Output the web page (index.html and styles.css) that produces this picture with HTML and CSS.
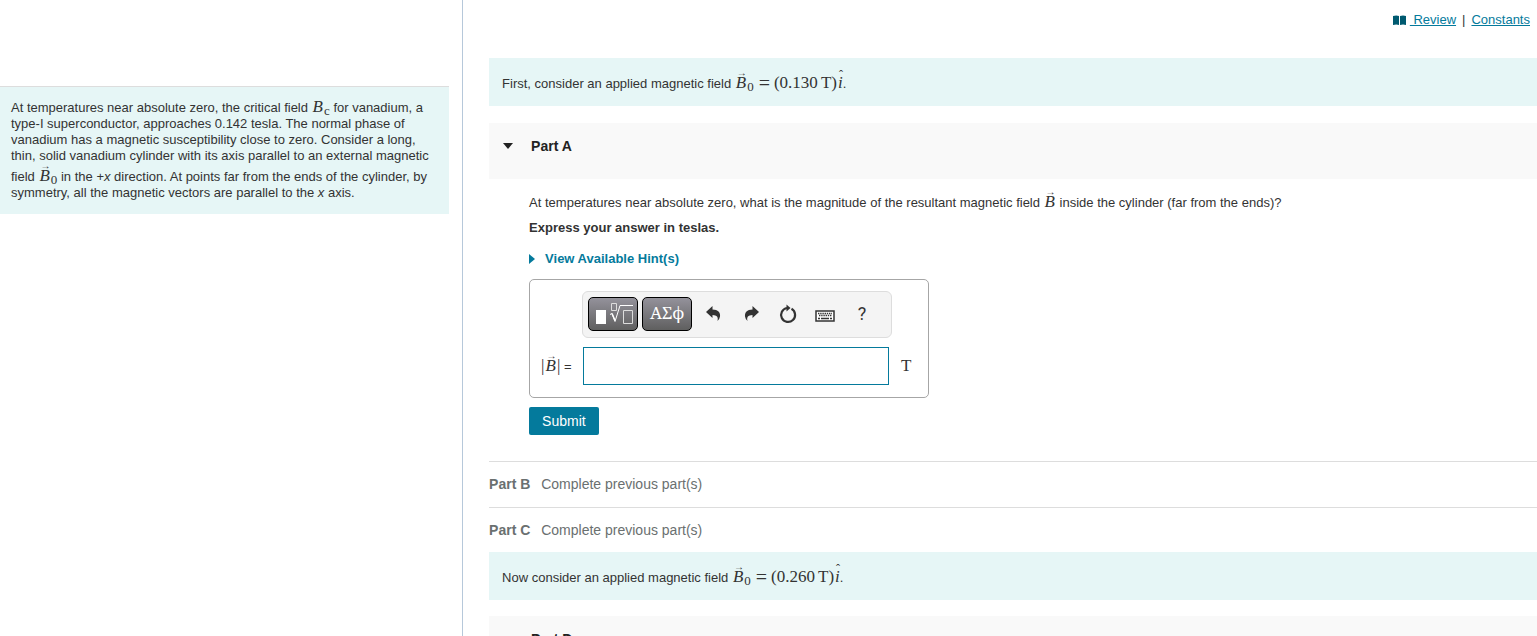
FILE: index.html
```html
<!DOCTYPE html>
<html lang="en">
<head>
  <meta charset="UTF-8">
  <meta name="viewport" content="width=device-width, initial-scale=1.0">
  <title>Superconductor in a Magnetic Field</title>
  <link rel="stylesheet" href="styles.css">
</head>
<body>
  <div class="layout">

    <!-- Problem statement -->
    <aside class="sidebar">
      <div class="intro">
        At temperatures near absolute zero, the critical field
        <span class="math"><span class="vec plain"><i>B</i></span><sub>c</sub></span> for vanadium, a type-I superconductor,
        approaches 0.142 tesla. The normal phase of vanadium has a magnetic susceptibility close
        to zero. Consider a long, thin, solid vanadium cylinder with its axis parallel to an
        external magnetic field <span class="math tall"><span class="vec"><i>B</i></span><sub>0</sub></span>
        in the +<i>x</i> direction. At points far from the ends of the cylinder, by symmetry, all
        the magnetic vectors are parallel to the <i>x</i> axis.
      </div>
    </aside>

    <main class="content">
      <nav class="top-links">
        <svg class="book" viewBox="0 0 14 11" aria-hidden="true">
          <path d="M0 1Q3.500 0 6 1V10Q3.500 9 0 10ZM7 1Q10 0 13 1V10Q10 9 7 10Z"/>
        </svg>
        <a href="#review">&nbsp;Review</a>
        <span class="divider">|</span>
        <a href="#constants">Constants</a>
      </nav>

      <div class="banner">
        First, consider an applied magnetic field
        <span class="math"><span class="vec"><i>B</i></span><sub>0</sub><span class="rel">=</span>(0.130<span class="unit">T</span>)<span class="hat"><i>i</i></span></span>.
      </div>

      <!-- Part A -->
      <section class="part">
        <h2 class="part-title">
          <button type="button" class="toggle"><span class="caret"></span>Part A</button>
        </h2>
        <div class="part-body">
          <p class="question">
            At temperatures near absolute zero, what is the magnitude of the resultant magnetic field
            <span class="math"><span class="vec"><i>B</i></span></span> inside the cylinder (far from the ends)?
          </p>
          <p class="instructions">Express your answer in teslas.</p>
          <button type="button" class="hints"><span class="arrow"></span>View Available Hint(s)</button>

          <form>
            <div class="answer">
              <div class="toolbar">
                <button type="button" class="key" aria-label="Templates">
                  <svg width="40" height="26" viewBox="0 0 40 26" aria-hidden="true">
                    <path d="M3 10h10v14H3z" fill="#fff"/>
                    <path d="M18.500 3.500h5v7h-5zM30.500 10.500h9v13h-9z" fill="none" stroke="#ddd"/>
                    <path d="M17 14.500l2-1 3 8 5-16h13" fill="none" stroke="#fff"/>
                    <path d="M19 13.500l3 7" fill="none" stroke="#fff" stroke-width="1.500"/>
                  </svg>
                </button>
                <button type="button" class="key">ΑΣϕ</button>
                <div class="tools">
                  <button type="button" aria-label="Undo">
                    <svg width="16" height="16" viewBox="0 0 16 16" aria-hidden="true">
                      <path d="M0 6L6.500 0V3.500C12 3.500 14.500 6.500 14 10.500Q13.500 13.500 11.500 15C12.500 11 11 9.200 6.500 9V12Z"/>
                    </svg>
                  </button>
                  <button type="button" aria-label="Redo">
                    <svg width="16" height="16" viewBox="0 0 16 16" aria-hidden="true">
                      <path d="M16 6L9.500 0V3.500C4 3.500 1.500 6.500 2 10.500Q2.500 13.500 4.500 15C3.500 11 5 9.200 9.500 9V12Z"/>
                    </svg>
                  </button>
                  <button type="button" aria-label="Reset">
                    <svg width="20" height="20" viewBox="0 0 20 20" aria-hidden="true">
                      <path d="M13.500 4.800A7 7 0 1 1 9 4" fill="none" stroke="#333" stroke-width="2.200"/>
                      <path d="M8.500 0.500L12.500 4 8.500 7.500Z"/>
                    </svg>
                  </button>
                  <button type="button" aria-label="Keyboard">
                    <svg class="keyboard" width="20" height="12" viewBox="0 0 20 12" aria-hidden="true">
                      <path d="M1 1h18v10H1z" fill="#fff" stroke="#333" stroke-width="1.500"/>
                      <path d="M3 3.500h14M4 5.500h13" stroke="#333" stroke-width="1.400" stroke-dasharray="1.400 .8"/>
                      <path d="M3 8.500h2M6 8.500h8M15 8.500h2" stroke="#333" stroke-width="1.400"/>
                    </svg>
                  </button>
                  <button type="button" class="help">?</button>
                </div>
              </div>
              <label for="answer" class="answer-label"><span class="math">|<span class="vec"><i>B</i></span>|</span> =</label>
              <input type="text" id="answer" class="answer-input">
              <span class="answer-unit">T</span>
            </div>
            <button type="submit" class="submit">Submit</button>
          </form>
        </div>
      </section>

      <!-- Locked parts -->
      <div class="locked"><b>Part B</b> <span>Complete previous part(s)</span></div>
      <div class="locked"><b>Part C</b> <span>Complete previous part(s)</span></div>

      <div class="banner">
        Now consider an applied magnetic field
        <span class="math"><span class="vec"><i>B</i></span><sub>0</sub><span class="rel">=</span>(0.260<span class="unit">T</span>)<span class="hat"><i>i</i></span></span>.
      </div>

      <section class="part">
        <h2 class="part-title">
          <button type="button" class="toggle"><span class="caret"></span>Part D</button>
        </h2>
      </section>
    </main>
  </div>
</body>
</html>
```
FILE: styles.css
```css
* {
  margin: 0;
  padding: 0;
  box-sizing: border-box;
}

body {
  font-family: Arial, "Liberation Sans", sans-serif;
  font-size: 13px;
  line-height: 16px;
  color: #333;
  background: #fff;
}

button {
  font: inherit;
  color: inherit;
  background: none;
  border: none;
  cursor: pointer;
}

a {
  color: #047a9c;
}

.layout {
  display: flex;
  height: 100vh;
  overflow: hidden;
}

/* Sidebar */
.sidebar {
  flex: 0 0 calc(30% + 1px);
  padding: 86px 13px 0 0;
}

.intro {
  padding: 13px 16px 13px 11px;
  background: #e6f6f6;
  border-top: 1px solid #ddd;
}

/* Main column */
.content {
  flex: 1;
  min-width: 0;
  padding-left: 26px;
  border-left: 1px solid #b6c8da;
  overflow-y: auto;
  scrollbar-width: none;
}

.top-links {
  display: flex;
  justify-content: flex-end;
  align-items: center;
  height: 58px;
  padding: 2px 7px 20px 0;
}

.book {
  width: 14px;
  height: 11px;
  margin-right: 3px;
  fill: #005a70;
}

.divider {
  margin: 0 6px;
}

.banner {
  padding: 18px 13px 14px;
  background: #e6f6f6;
}

/* Math */
.math {
  font-family: "Liberation Serif", "Times New Roman", serif;
  font-size: 17px;
  line-height: 1px;
  white-space: nowrap;
}

.math.tall {
  display: inline-block;
  height: 21px;
  line-height: 24px;
}

.math sub {
  font-size: 13px;
  line-height: 1px;
  vertical-align: -3px;
}

.vec,
.hat {
  position: relative;
  margin-left: 1px;
}

.vec {
  margin-right: 1px;
}

.vec::before,
.hat::before {
  content: "→";
  position: absolute;
  left: 1px;
  top: -5px;
  font-size: 10px;
  line-height: 10px;
}

.vec.plain::before {
  content: none;
}

.hat::before {
  content: "ˆ";
  left: 1px;
  top: -3px;
  font-size: 12px;
}

.rel {
  margin: 0 4px 0 5px;
  font-size: 20px;
  vertical-align: -2px;
}

.unit {
  margin-left: 3px;
}

/* Parts */
.part {
  margin-top: 17px;
}

.part-title {
  height: 56px;
  padding: 15px 14px;
  font-size: 14px;
  line-height: 16px;
  color: #222;
  background: #f9f9f9;
}

.toggle {
  display: flex;
  align-items: center;
}

.caret {
  margin-right: 18px;
  border: 5px solid transparent;
  border-top: 6px solid #222;
  border-bottom: none;
}

.part-body {
  padding: 16px 40px 26px;
}

.instructions {
  margin-top: 9px;
  font-weight: bold;
}

.hints {
  display: flex;
  align-items: center;
  margin-top: 15px;
  font-weight: bold;
  color: #047a9c;
}

.arrow {
  margin-right: 10px;
  border: 5px solid transparent;
  border-left: 6px solid #047a9c;
  border-right: none;
}

/* Answer box */
.answer {
  display: grid;
  grid-template-columns: 41px 310px 1fr;
  row-gap: 9px;
  align-items: center;
  max-width: 400px;
  margin-top: 12px;
  padding: 11px 11px 12px;
  border: 1px solid #a6a6a6;
  border-radius: 5px;
}

.toolbar {
  grid-column: 2;
  display: flex;
  gap: 4px;
  height: 47px;
  padding: 5px;
  background: #f4f4f4;
  border: 1px solid #ddd;
  border-radius: 6px;
}

.key {
  display: flex;
  align-items: center;
  justify-content: center;
  width: 50px;
  height: 34px;
  padding-bottom: 2px;
  font-family: "Noto Serif", "Liberation Serif", serif;
  font-size: 17px;
  color: #fff;
  background: linear-gradient(#94929b, #5f5f5f);
  border: 1px solid #000;
  border-radius: 5px;
}

.tools {
  display: flex;
}

.tools button {
  display: flex;
  align-items: center;
  justify-content: center;
  width: 37px;
  height: 34px;
  padding-right: 1px;
  fill: #333;
}

.tools .help {
  font-family: Roboto, Arial, sans-serif;
  font-size: 18px;
}

.keyboard {
  margin-top: 4px;
}

.answer-label {
  grid-column: 1;
  padding-top: 2px;
}

.answer-input {
  height: 38px;
  margin: 0 3px 0 1px;
  padding: 0 8px;
  font-size: 16px;
  border: 1px solid #047a9c;
}

.answer-unit {
  padding-left: 9px;
  font-family: "Liberation Serif", "Times New Roman", serif;
  font-size: 17px;
}

.submit {
  height: 28px;
  margin-top: 9px;
  padding: 0 13px;
  font-size: 14px;
  color: #fff;
  background: #047a9c;
  border-radius: 2px;
}

/* Locked parts */
.locked {
  padding: 14px 0 15px;
  font-size: 14px;
  color: #6a7070;
  border-top: 1px solid #ddd;
}

.locked + .locked {
  padding-bottom: 14px;
}

.locked span {
  margin-left: 7px;
}

.locked ~ .part {
  margin-top: 16px;
}
```
